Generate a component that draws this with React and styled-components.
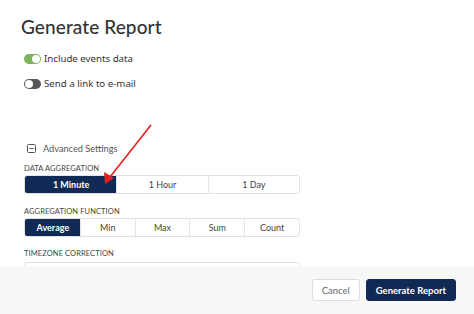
import React, { useState } from 'react'
import styled, { createGlobalStyle } from 'styled-components'

const Global = createGlobalStyle`
  html, body { margin: 0; padding: 0; background: #fff; }
  body { font-family: Lato, "Open Sans", sans-serif; color: #333; }
`

const navy = '#112a55'

const Page = styled.div`
  width: 474px;
  height: 314px;
  display: flex;
  flex-direction: column;
  overflow: hidden;
  position: relative;
`

const Body = styled.div`
  flex: 1;
  min-height: 0;
  overflow: hidden;
  padding: 15px 174px 0 24px;
  display: flex;
  flex-direction: column;
  & > * { flex-shrink: 0; }
`

const Title = styled.h1`
  margin: 0 0 0 -3px;
  font-size: 19px;
  font-weight: 500;
  color: #333;
  letter-spacing: 0.1px;
`

const ToggleRow = styled.label`
  display: flex;
  align-items: center;
  gap: 3px;
  font-family: "Noto Sans", sans-serif;
  font-size: 9.7px;
  color: #333;
  margin-top: ${p => p.$top}px;
`

const Track = styled.span`
  width: 17px;
  height: 10px;
  border-radius: 5px;
  background: ${p => (p.$on ? '#7fb35c' : '#585858')};
  display: flex;
  align-items: center;
  justify-content: ${p => (p.$on ? 'flex-end' : 'flex-start')};
  padding: 0 1px;
  box-sizing: border-box;
`

const Knob = styled.span`
  width: 8px;
  height: 8px;
  border-radius: 50%;
  background: #fff;
`

const Advanced = styled.div`
  display: flex;
  align-items: center;
  gap: 7px;
  margin-top: 53px;
  margin-left: 3px;
  font-size: 9.2px;
  color: #555;
`

const FieldLabel = styled.div`
  font-size: 7.5px;
  color: #444;
  text-transform: uppercase;
  margin-top: ${p => p.$top}px;
  margin-bottom: 2px;
  letter-spacing: 0.1px;
`

const Segmented = styled.div`
  display: grid;
  grid-template-columns: repeat(${p => p.$n}, 1fr);
  height: 19px;
  border: 1px solid #e2e2e2;
  border-radius: 3px;
  overflow: hidden;
  box-sizing: border-box;
`

const Segment = styled.button`
  all: unset;
  display: flex;
  align-items: center;
  justify-content: center;
  font-family: Lato, sans-serif;
  font-size: 9px;
  font-weight: ${p => (p.$active ? 700 : 400)};
  color: ${p => (p.$active ? '#fff' : '#444')};
  background: ${p => (p.$active ? navy : '#fff')};
  border-left: 1px solid ${p => (p.$first ? 'transparent' : '#e4e4e4')};
  cursor: pointer;
`

const Input = styled.div`
  height: 20px;
  margin-top: 2px;
  border: 1px solid #e2e2e2;
  border-radius: 3px;
`

const Footer = styled.div`
  height: 48px;
  background: #f7f7f7;
  display: flex;
  justify-content: flex-end;
  align-items: center;
  gap: 6px;
  padding: 0 18px 0 0;
  box-sizing: border-box;
  flex-shrink: 0;
`

const Button = styled.button`
  all: unset;
  height: 20px;
  padding: 0 9px;
  border-radius: 3px;
  font-family: Lato, sans-serif;
  font-size: 9.5px;
  font-weight: ${p => (p.$primary ? 700 : 400)};
  background: ${p => (p.$primary ? navy : '#fff')};
  color: ${p => (p.$primary ? '#fff' : '#666')};
  border: 1px solid ${p => (p.$primary ? navy : '#ddd')};
  display: flex;
  align-items: center;
`

const Arrow = styled.svg`
  position: absolute;
  left: 0;
  top: 0;
  pointer-events: none;
`

const MinusBox = () => (
  <svg width="9" height="9" viewBox="0 0 9 9">
    <rect x="0.5" y="0.5" width="8" height="8" rx="1" fill="none" stroke="#555" />
    <line x1="2.5" y1="4.5" x2="6.5" y2="4.5" stroke="#555" />
  </svg>
)

const Toggle = ({ on, label, top }) => (
  <ToggleRow $top={top}>
    <Track $on={on}><Knob /></Track>
    {label}
  </ToggleRow>
)

const App = () => {
  const [agg, setAgg] = useState('1 Minute')
  const [fn, setFn] = useState('Average')
  return (
    <Page>
      <Global />
      <Body>
        <Title>Generate Report</Title>
        <Toggle on label="Include events data" top={14} />
        <Toggle label="Send a link to e-mail" top={12} />
        <Advanced><MinusBox />Advanced Settings</Advanced>
        <FieldLabel $top={10}>Data Aggregation</FieldLabel>
        <Segmented $n={3}>
          {['1 Minute', '1 Hour', '1 Day'].map((a, i) => (
            <Segment key={a} $first={i === 0} $active={agg === a} onClick={() => setAgg(a)}>{a}</Segment>
          ))}
        </Segmented>
        <FieldLabel $top={13}>Aggregation Function</FieldLabel>
        <Segmented $n={5}>
          {['Average', 'Min', 'Max', 'Sum', 'Count'].map((a, i) => (
            <Segment key={a} $first={i === 0} $active={fn === a} onClick={() => setFn(a)}>{a}</Segment>
          ))}
        </Segmented>
        <FieldLabel $top={12}>Timezone Correction</FieldLabel>
        <Input />
      </Body>
      <Footer>
        <Button>Cancel</Button>
        <Button $primary>Generate Report</Button>
      </Footer>
      <Arrow width="474" height="314">
        <line x1="151" y1="125" x2="110" y2="177" stroke="#e02020" strokeWidth="1.6" />
        <polygon points="105,184 104,172 114,178" fill="#e02020" />
      </Arrow>
    </Page>
  )
}

export default App
